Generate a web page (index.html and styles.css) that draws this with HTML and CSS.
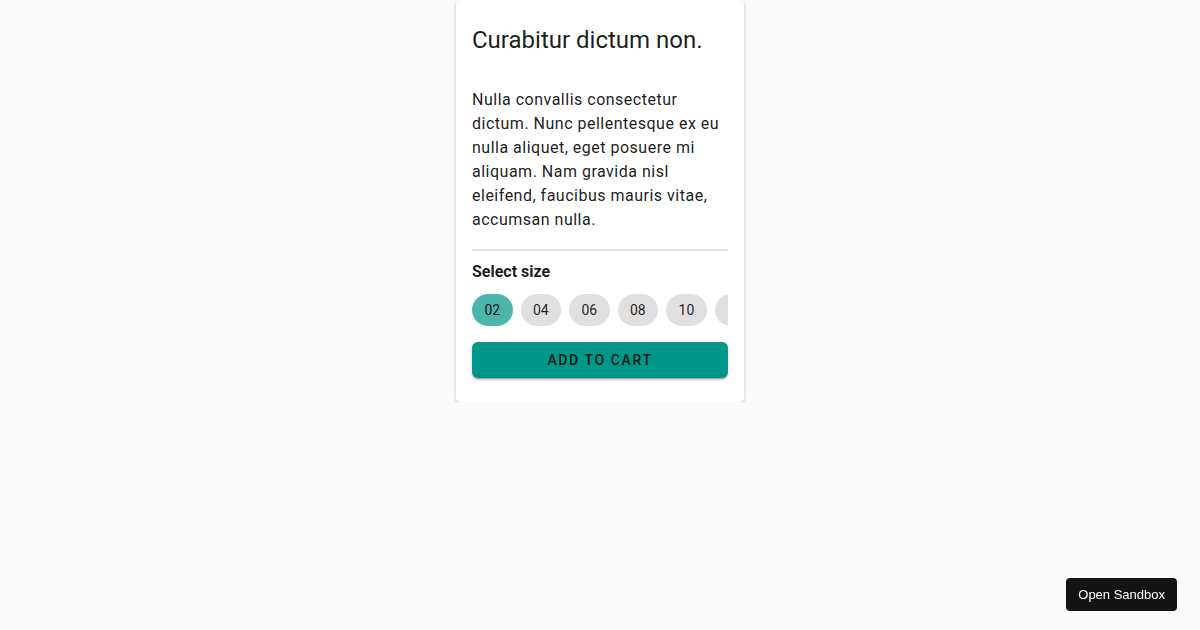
FILE: index.html
```html
<!DOCTYPE html>
<html>
<head>
<meta charset="utf-8">
<link rel="stylesheet" href="styles.css">
</head>
<body>
<div class="page">
  <div class="card">
    <h5 class="title">Curabitur dictum non.</h5>
    <p class="body">Nulla convallis consectetur dictum. Nunc pellentesque ex eu nulla aliquet, eget posuere mi aliquam. Nam gravida nisl eleifend, faucibus mauris vitae, accumsan nulla.</p>
    <hr class="divider">
    <div class="label">Select size</div>
    <div class="chips">
      <span class="chip selected">02</span>
      <span class="chip">04</span>
      <span class="chip">06</span>
      <span class="chip">08</span>
      <span class="chip">10</span>
      <span class="chip">12</span>
    </div>
    <button class="cart">ADD TO CART</button>
  </div>
</div>
<a class="sandbox">Open Sandbox</a>
</body>
</html>
```
FILE: styles.css
```css
html, body {
  margin: 0;
  padding: 0;
  background: #fafafa;
  font-family: Roboto, "Liberation Sans", sans-serif;
  color: rgba(0,0,0,0.87);
}
.page {
  display: flex;
  justify-content: center;
}
.card {
  width: 256px;
  background: #fff;
  border-radius: 4px;
  padding: 24px 16px 24px;
  box-shadow: 0 3px 1px -2px rgba(0,0,0,0.2), 0 2px 2px 0 rgba(0,0,0,0.14), 0 1px 5px 0 rgba(0,0,0,0.12);
}
.title {
  margin: 0;
  font-size: 24px;
  font-weight: 400;
  line-height: 32px;
  color: rgba(0,0,0,0.9);
}
.body {
  margin: 32px 0 0;
  font-size: 16px;
  line-height: 24px;
  letter-spacing: 0.5px;
  color: rgba(0,0,0,0.9);
}
.divider {
  margin: 17px 0 0;
  border: none;
  height: 2px;
  background: #e0e0e0;
}
.label {
  margin-top: 9px;
  font-size: 16px;
  font-weight: 700;
  line-height: 24px;
  color: rgba(0,0,0,0.9);
}
.chips {
  margin-top: 10px;
  display: flex;
  gap: 8px;
  overflow: hidden;
}
.chip {
  flex: none;
  height: 32px;
  line-height: 32px;
  padding: 0 12.4px;
  border-radius: 16px;
  background: #e0e0e0;
  font-size: 14px;
  color: rgba(0,0,0,0.87);
}
.chip.selected {
  background: #4db6ac;
}
.cart {
  display: block;
  width: 100%;
  margin-top: 16px;
  height: 36px;
  border: none;
  border-radius: 6px;
  background: #009688;
  font-family: Roboto, "Liberation Sans", sans-serif;
  font-size: 14px;
  font-weight: 500;
  letter-spacing: 1.6px;
  color: rgba(0,0,0,0.87);
  box-shadow: 0 3px 1px -2px rgba(0,0,0,0.2), 0 2px 2px 0 rgba(0,0,0,0.14), 0 1px 5px 0 rgba(0,0,0,0.12);
}
.sandbox {
  position: fixed;
  right: 23px;
  bottom: 19px;
  background: rgba(0,0,0,0.92);
  color: #fff;
  font-family: "Liberation Sans", Arial, sans-serif;
  font-size: 13px;
  padding: 0 12px;
  height: 33px;
  line-height: 33px;
  border-radius: 4px;
}
```
